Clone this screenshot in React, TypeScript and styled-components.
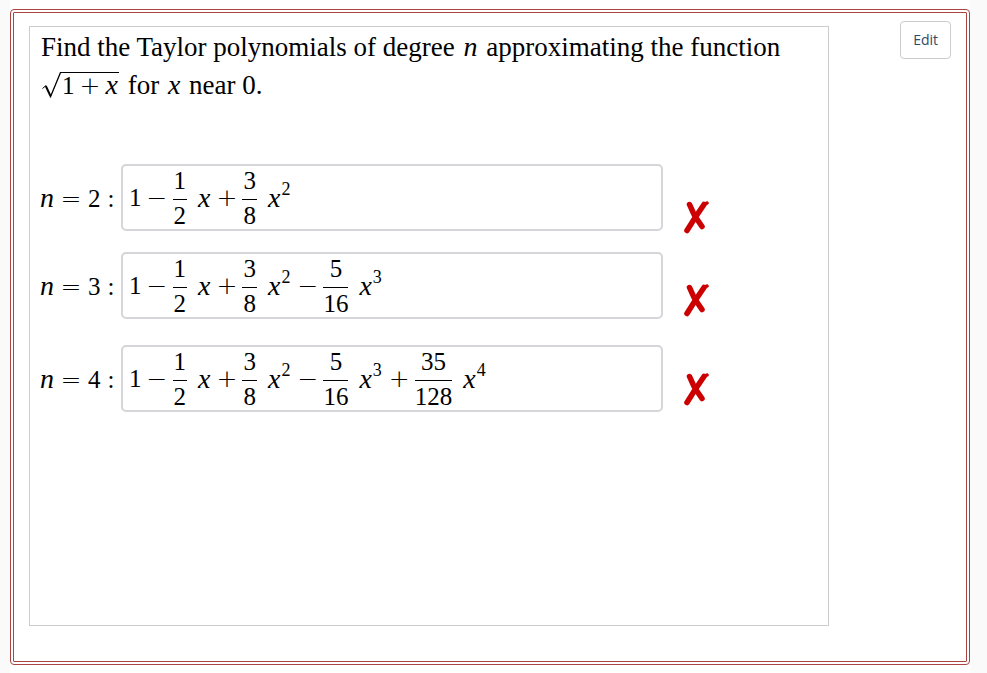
import React from "react";
import styled, { createGlobalStyle } from "styled-components";

const GlobalStyle = createGlobalStyle`
  *, *::before, *::after { box-sizing: border-box; }
  body {
    margin: 0;
    background: #fafafa;
    color: #000;
    font-family: "Liberation Serif", serif;
  }
`;

const Page = styled.main`
  margin: 0 17px 0 10px;
  padding: 9px 0 8px;
  background: #fff;
`;

const Frame = styled.section`
  display: flex;
  justify-content: space-between;
  align-items: flex-start;
  gap: 16px;
  padding: 8px 15px 35px;
  border: 4px double #a94442;
  border-radius: 4px;
`;

const Problem = styled.article`
  flex: 0 1 800px;
  min-height: 600px;
  margin-top: 5px;
  padding: 1px 9px;
  border: 1px solid #ccc;
`;

const EditButton = styled.button`
  height: 38px;
  padding: 0 12px;
  border: 1px solid #ccc;
  border-radius: 4px;
  background: #fff;
  color: #2d4a66;
  font: 14px/20px "Open Sans", sans-serif;
  cursor: pointer;
`;

const Variable = styled.i`
  font-size: 28px;
  line-height: 24px;
`;

const Prompt = styled.p`
  margin: 0;
  padding-left: 2px;
  font-size: 27px;
  line-height: 38px;

  > ${Variable} {
    padding: 0 2px;
  }
`;

const Root = styled.span`
  display: inline-flex;
  align-items: baseline;
  margin-right: 2px;
  white-space: nowrap;
  line-height: 26px;
`;

const RadicalSign = styled.svg`
  align-self: stretch;
  width: 20px;
  height: 28px;
  fill: none;
  stroke: #000;
`;

const Radicand = styled.span`
  display: inline-flex;
  align-items: baseline;
  padding: 0 1px;
  border-top: 1px solid #000;
  font-size: 25px;
`;

const Operator = styled.span`
  width: 31px;
  text-align: center;
  font: 200 25px/24px "DejaVu Sans", sans-serif;
`;

const Answers = styled.div`
  display: grid;
  padding-top: 60px;
`;

const Row = styled.div<{ $gap: number }>`
  display: flex;
  align-items: flex-start;
  margin-top: ${(p) => p.$gap}px;
`;

const Label = styled.span`
  display: flex;
  flex: 0 0 82px;
  align-items: baseline;
  padding: 21px 0 0 1px;
  font-size: 25px;
  line-height: 28px;

  > ${Operator} {
    width: 34px;
  }
`;

const Colon = styled.span`
  padding-left: 7px;
`;

const Field = styled.div`
  display: flex;
  flex: 0 1 542px;
  align-items: center;
  height: 67px;
  padding: 0 6px;
  border: 2px solid #d5d5da;
  border-radius: 5px;
  background: #fff;
  font-size: 25px;
  line-height: 28px;
  white-space: nowrap;
  outline: none;
`;

const Term = styled.span`
  display: inline-flex;
  align-items: center;
`;

const Fraction = styled.span`
  display: inline-flex;
  flex-direction: column;
  margin-right: 11px;
  text-align: center;
  line-height: 31px;
`;

const Numerator = styled.span`
  padding: 0 1px 3px;
  border-bottom: 1px solid #000;
`;

const Power = styled.sup`
  align-self: flex-start;
  padding: 0 1px;
  font-size: 18px;
  line-height: 20px;
`;

const Base = styled.span`
  display: inline-flex;
  height: 38px;
  align-items: center;
  padding-right: 1px;
`;

const Mark = styled.svg<{ $drop: number }>`
  flex: none;
  width: 26px;
  height: 34px;
  margin: ${(p) => p.$drop}px 0 0 20px;
  fill: none;
  stroke: #c00;
  stroke-linecap: round;
  stroke-linejoin: round;
`;

interface TermData {
  sign: string;
  num: number;
  den: number;
  power?: number;
}

const series: TermData[] = [
  { sign: "−", num: 1, den: 2 },
  { sign: "+", num: 3, den: 8, power: 2 },
  { sign: "−", num: 5, den: 16, power: 3 },
  { sign: "+", num: 35, den: 128, power: 4 },
];

const rows = [
  { degree: 2, gap: 0, drop: 36 },
  { degree: 3, gap: 18, drop: 31 },
  { degree: 4, gap: 26, drop: 27 },
];

function Polynomial({ degree }: { degree: number }) {
  return (
    <>
      <span>1</span>
      {series.slice(0, degree).map((t) => (
        <Term key={t.den}>
          <Operator>{t.sign}</Operator>
          <Fraction>
            <Numerator>{t.num}</Numerator>
            <span>{t.den}</span>
          </Fraction>
          <Base>
            <Variable>x</Variable>
            {t.power && <Power>{t.power}</Power>}
          </Base>
        </Term>
      ))}
    </>
  );
}

export default function App() {
  return (
    <>
      <GlobalStyle />
      <Page>
        <Frame>
          <Problem>
            <Prompt>
              Find the Taylor polynomials of degree <Variable>n</Variable> approximating the function{" "}
              <Root>
                <RadicalSign viewBox="0 0 20 28" role="img" aria-label="square root of">
                  <path d="M1.500 16.500 5 13.500" strokeWidth="1" />
                  <path d="m4.800 14 4.700 10" strokeWidth="2" />
                  <path d="M9.200 25.500 19.500.500H20" strokeWidth="1.300" />
                </RadicalSign>
                <Radicand>
                  1<Operator>+</Operator>
                  <Variable>x</Variable>
                </Radicand>
              </Root>{" "}
              for <Variable>x</Variable> near 0.
            </Prompt>
            <Answers>
              {rows.map((r) => (
                <Row key={r.degree} $gap={r.gap}>
                  <Label id={`degree-${r.degree}`}>
                    <Variable>n</Variable>
                    <Operator>=</Operator>
                    {r.degree}
                    <Colon>:</Colon>
                  </Label>
                  <Field role="textbox" tabIndex={0} aria-labelledby={`degree-${r.degree}`}>
                    <Polynomial degree={r.degree} />
                  </Field>
                  <Mark $drop={r.drop} viewBox="0 0 26 34" role="img" aria-label="Incorrect">
                    <path d="M4 30.500 12.500 17 21 4.500" strokeWidth="5.500" />
                    <path d="m12.500 17 9.500-13 2-1" strokeWidth="3.500" />
                    <path d="M6.500 4.500c2 4 3.500 8.500 6 12.500l6.500 9.500" strokeWidth="5.500" />
                  </Mark>
                </Row>
              ))}
            </Answers>
          </Problem>
          <EditButton type="button">Edit</EditButton>
        </Frame>
      </Page>
    </>
  );
}
